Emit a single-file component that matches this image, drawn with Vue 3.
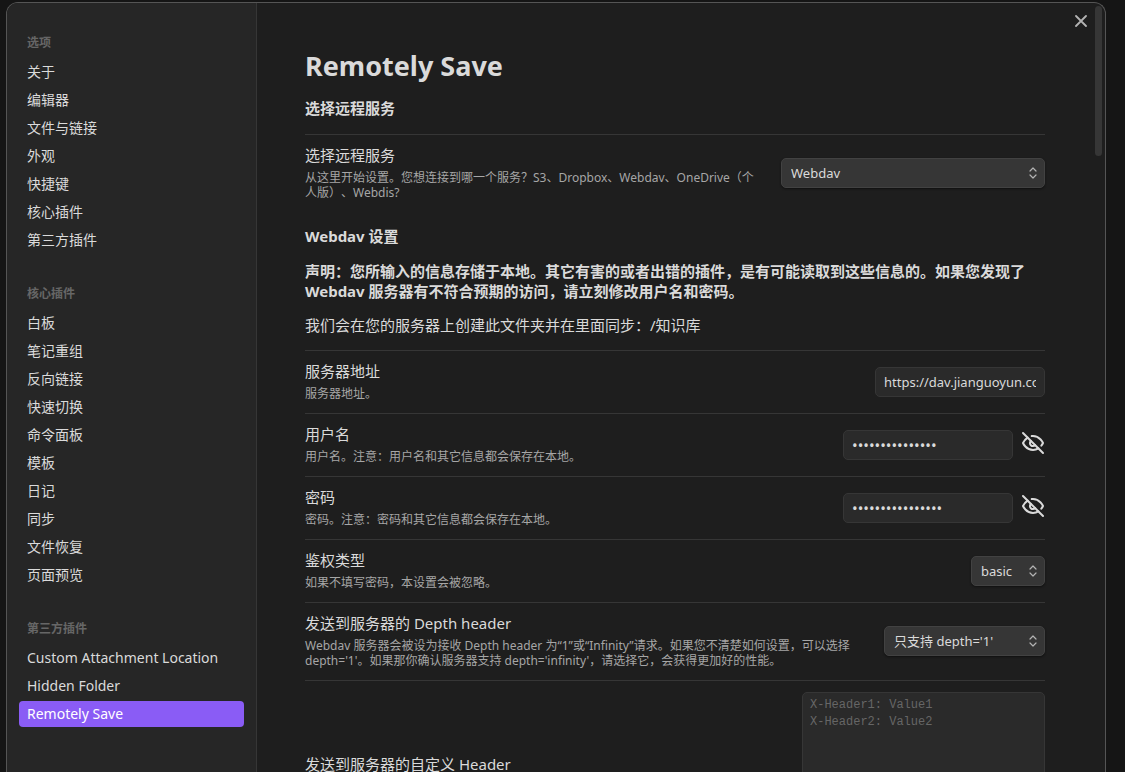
<script setup>
import { ref } from 'vue'

const groups = [
  { title: '选项', items: ['关于', '编辑器', '文件与链接', '外观', '快捷键', '核心插件', '第三方插件'] },
  { title: '核心插件', items: ['白板', '笔记重组', '反向链接', '快速切换', '命令面板', '模板', '日记', '同步', '文件恢复', '页面预览'] },
  { title: '第三方插件', items: ['Custom Attachment Location', 'Hidden Folder', 'Remotely Save'] },
]
const active = ref('Remotely Save')

const service = ref('webdav')
const address = ref('https://dav.jianguoyun.com/dav/')
const auth = ref('basic')
const depth = ref('1')
const headers = ref('')

const secrets = ref([
  { id: 'username', name: '用户名', desc: '用户名。注意：用户名和其它信息都会保存在本地。', value: 'x'.repeat(15), hidden: true },
  { id: 'password', name: '密码', desc: '密码。注意：密码和其它信息都会保存在本地。', value: 'x'.repeat(16), hidden: true },
])
</script>

<template>
  <div class="backdrop">
    <div class="modal" role="dialog" aria-label="Remotely Save">
      <nav class="sidebar">
        <section v-for="g in groups" :key="g.title" class="group">
          <h3 class="group-title">{{ g.title }}</h3>
          <button
            v-for="item in g.items"
            :key="item"
            type="button"
            class="nav-item"
            :class="{ active: item === active }"
            @click="active = item"
          >{{ item }}</button>
        </section>
      </nav>

      <main class="content">
        <h1>Remotely Save</h1>
        <h2 class="first">选择远程服务</h2>

        <div class="row">
          <div class="info">
            <label class="name" for="service">选择远程服务</label>
            <div class="desc">从这里开始设置。您想连接到哪一个服务？S3、Dropbox、Webdav、OneDrive（个人版）、Webdis?</div>
          </div>
          <span class="select wide">
            <select id="service" v-model="service"><option value="webdav">Webdav</option></select>
            <svg viewBox="0 0 8 12" aria-hidden="true"><path d="M1 4 4 1l3 3M1 8l3 3 3-3" /></svg>
          </span>
        </div>

        <h2 class="second">Webdav 设置</h2>
        <p class="notice">声明：您所输入的信息存储于本地。其它有害的或者出错的插件，是有可能读取到这些信息的。如果您发现了 Webdav 服务器有不符合预期的访问，请立刻修改用户名和密码。</p>
        <p class="folder">我们会在您的服务器上创建此文件夹并在里面同步：/知识库</p>

        <div class="row">
          <div class="info">
            <label class="name" for="address">服务器地址</label>
            <div class="desc">服务器地址。</div>
          </div>
          <input id="address" v-model="address" class="field" type="text" spellcheck="false" />
        </div>

        <div v-for="s in secrets" :key="s.id" class="row">
          <div class="info">
            <label class="name" :for="s.id">{{ s.name }}</label>
            <div class="desc">{{ s.desc }}</div>
          </div>
          <input :id="s.id" v-model="s.value" class="field" :type="s.hidden ? 'password' : 'text'" />
          <button class="eye" type="button" :aria-label="s.name" @click="s.hidden = !s.hidden">
            <svg viewBox="0 0 24 24" aria-hidden="true">
              <path d="M9.88 9.88a3 3 0 1 0 4.24 4.24" />
              <path d="M10.73 5.08A10.43 10.43 0 0 1 12 5c7 0 10 7 10 7a13.16 13.16 0 0 1-1.67 2.68" />
              <path d="M6.61 6.61A13.526 13.526 0 0 0 2 12s3 7 10 7a9.74 9.74 0 0 0 5.39-1.61" />
              <path d="M2 2l20 20" />
            </svg>
          </button>
        </div>

        <div class="row">
          <div class="info">
            <label class="name" for="auth">鉴权类型</label>
            <div class="desc">如果不填写密码，本设置会被忽略。</div>
          </div>
          <span class="select small">
            <select id="auth" v-model="auth"><option value="basic">basic</option></select>
            <svg viewBox="0 0 8 12" aria-hidden="true"><path d="M1 4 4 1l3 3M1 8l3 3 3-3" /></svg>
          </span>
        </div>

        <div class="row">
          <div class="info">
            <label class="name" for="depth">发送到服务器的 Depth header</label>
            <div class="desc">Webdav 服务器会被设为接收 Depth header 为“1”或“Infinity”请求。如果您不清楚如何设置，可以选择 depth='1'。如果那你确认服务器支持 depth='infinity'，请选择它，会获得更加好的性能。</div>
          </div>
          <span class="select medium">
            <select id="depth" v-model="depth"><option value="1">只支持 depth='1'</option></select>
            <svg viewBox="0 0 8 12" aria-hidden="true"><path d="M1 4 4 1l3 3M1 8l3 3 3-3" /></svg>
          </span>
        </div>

        <div class="row">
          <div class="info">
            <label class="name" for="headers">发送到服务器的自定义 Header</label>
          </div>
          <textarea id="headers" v-model="headers" placeholder="X-Header1: Value1&#10;X-Header2: Value2"></textarea>
        </div>
      </main>

      <button class="close" type="button" aria-label="关闭">
        <svg viewBox="0 0 12 12" aria-hidden="true"><path d="M1 1l10 10M11 1 1 11" /></svg>
      </button>
      <div class="thumb"></div>
    </div>
  </div>
</template>

<style>
body {
  margin: 0;
  background: #151515;
}
</style>

<style scoped>
* {
  box-sizing: border-box;
}
.backdrop {
  height: 100vh;
  overflow: hidden;
  padding: 2px 19px 0 6px;
  background: #151515;
  color: #dadada;
  font-family: "Noto Sans", "Noto Sans CJK SC", sans-serif;
  font-size: 15px;
  text-spacing-trim: space-all;
}
button,
input,
select {
  font-family: inherit;
}
.modal {
  position: relative;
  display: flex;
  height: 100%;
  overflow: hidden;
  border: 1px solid #555;
  border-bottom: 0;
  border-radius: 12px 12px 0 0;
  background: #1e1e1e;
}
.sidebar {
  flex: 0 0 250px;
  padding: 32px 12px 0;
  border-right: 1px solid #363636;
  background: #262626;
}
.group {
  display: flex;
  flex-direction: column;
  gap: 2px;
  margin-bottom: 33px;
}
.group-title {
  margin: 0 0 6px;
  padding: 0 8px;
  color: #666;
  font-size: 12px;
  font-weight: 600;
  line-height: 16px;
}
.nav-item {
  height: 26px;
  padding: 0 8px;
  border: 0;
  border-radius: 4px;
  background: none;
  color: #dadada;
  font-size: 14px;
  line-height: 26px;
  text-align: left;
  white-space: nowrap;
}
.nav-item.active {
  background: #8a5cf5;
  color: #fff;
}
.content {
  flex: 1;
  min-width: 0;
  padding: 45px 60px 0 48px;
}
h1 {
  margin: 0;
  font-size: 27px;
  font-weight: 700;
  line-height: 36px;
}
h2 {
  margin: 0;
  font-size: 15px;
  font-weight: 700;
  line-height: 20px;
}
.first {
  margin: 14px 0 16px;
}
.second {
  margin: 14px 0 15px;
}
p {
  margin: 0 0 14px;
  font-size: 15px;
  line-height: 20px;
}
.notice {
  font-weight: 700;
}
.folder {
  margin-bottom: 15px;
}
.row {
  display: flex;
  align-items: center;
  padding: 11px 0 12px;
  border-top: 1px solid #363636;
}
.info {
  flex: 1;
  min-width: 0;
  margin-right: 20px;
}
.name {
  display: block;
  font-size: 15px;
  line-height: 19px;
}
.desc {
  margin-top: 5px;
  color: #a6a6a6;
  font-size: 12px;
  line-height: 15px;
}
.field {
  width: 170px;
  height: 30px;
  margin: 0;
  padding: 0 8px;
  border: 1px solid #363636;
  border-radius: 5px;
  background: #2a2a2a;
  color: #dadada;
  font-size: 13px;
}
.field[type="password"] {
  font-size: 15px;
}
.eye {
  display: block;
  margin-left: 8px;
  padding: 0 0 4px;
  border: 0;
  background: none;
}
.eye svg {
  display: block;
  width: 24px;
  height: 24px;
}
svg {
  fill: none;
  stroke: #dadada;
  stroke-width: 2;
  stroke-linecap: round;
  stroke-linejoin: round;
}
.select {
  position: relative;
  height: 30px;
}
.select select {
  appearance: none;
  width: 100%;
  height: 30px;
  padding: 0 24px 0 9px;
  border: 1px solid #424242;
  border-radius: 5px;
  background: #363636;
  box-shadow: 0 1px 2px #111;
  color: #dadada;
  font-size: 13px;
}
.select svg {
  position: absolute;
  top: 9px;
  right: 8px;
  width: 8px;
  height: 12px;
  stroke: #b3b3b3;
  stroke-width: 1.2;
}
.wide {
  width: 264px;
}
.medium {
  width: 161px;
}
.small {
  width: 74px;
}
textarea {
  display: block;
  width: 243px;
  height: 144px;
  padding: 4px 7px;
  border: 1px solid #363636;
  border-radius: 5px;
  background: #2a2a2a;
  color: #dadada;
  font-family: "Liberation Mono", monospace;
  font-size: 12px;
  line-height: 17px;
  resize: none;
}
textarea::placeholder {
  color: #666;
}
.close {
  position: absolute;
  top: 10px;
  right: 16px;
  padding: 2px;
  border: 0;
  background: none;
}
.close svg {
  display: block;
  width: 12px;
  height: 12px;
  stroke: #b3b3b3;
  stroke-width: 1.8;
}
.thumb {
  position: absolute;
  top: 3px;
  right: 3px;
  width: 7px;
  height: 150px;
  border-radius: 4px;
  background: #363636;
}
</style>
